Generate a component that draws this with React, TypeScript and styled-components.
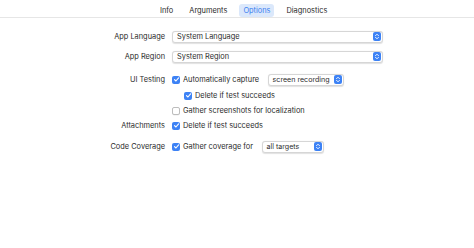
import { FC } from "react";
import styled, { createGlobalStyle } from "styled-components";

const GlobalStyle = createGlobalStyle`
  html, body {
    margin: 0;
    padding: 0;
    background: #ffffff;
  }
  body {
    font-family: "Inter", "Liberation Sans", sans-serif;
    font-size: 7.4px;
    color: #2b2b2b;
    -webkit-font-smoothing: antialiased;
  }
`;

const Page = styled.div`
  width: 474px;
  height: 248px;
  display: flex;
  flex-direction: column;
`;

const TabBar = styled.div`
  display: flex;
  align-items: center;
  gap: 8px;
  padding: 3px 0 0 156px;
  height: 14px;
  border-bottom: 1px solid #e6e6e6;
`;

const Tab = styled.div<{ $active?: boolean }>`
  height: 13px;
  line-height: 13px;
  padding: 0 4px;
  border-radius: 3px;
  background: ${(p) => (p.$active ? "#dbe8fb" : "transparent")};
  color: ${(p) => (p.$active ? "#3b7ff0" : "#2a2a2a")};
`;

const Form = styled.div`
  display: flex;
  flex-direction: column;
  padding-top: 11px;
`;

const Row = styled.div<{ $top?: number }>`
  display: grid;
  grid-template-columns: 165px 211px;
  column-gap: 7px;
  height: 15px;
  align-items: center;
  margin-top: ${(p) => p.$top ?? 0}px;
`;

const Label = styled.div`
  text-align: right;
  white-space: nowrap;
`;

const Control = styled.div<{ $indent?: number }>`
  display: flex;
  align-items: center;
  white-space: nowrap;
  padding-left: ${(p) => p.$indent ?? 0}px;
`;

const Popup = styled.div<{ $width?: number }>`
  display: flex;
  align-items: center;
  justify-content: space-between;
  box-sizing: border-box;
  width: ${(p) => (p.$width ? `${p.$width}px` : "100%")};
  height: 12px;
  padding: 0 1.5px 0 ${(p) => (p.$width ? 3.5 : 4)}px;
  background: #ffffff;
  border: 0.5px solid #d6d6d6;
  border-radius: 3px;
  box-shadow: 0 0.5px 1px rgba(0, 0, 0, 0.12);
  margin-left: ${(p) => (p.$width ? 9 : 0)}px;
  font-size: ${(p) => (p.$width ? 7.1 : 7.4)}px;
`;

const Stepper = styled.span`
  display: inline-flex;
  flex-shrink: 0;
  align-items: center;
  justify-content: center;
  width: 8px;
  height: 9px;
  margin-left: 2px;
  border-radius: 2px;
  background: #3d82f5;
`;

const Box = styled.span<{ $checked?: boolean }>`
  display: inline-flex;
  align-items: center;
  justify-content: center;
  box-sizing: border-box;
  width: 8px;
  height: 8px;
  margin-right: 3px;
  border-radius: 2px;
  background: ${(p) => (p.$checked ? "#3d82f5" : "#ffffff")};
  border: ${(p) => (p.$checked ? "none" : "0.5px solid #bdbdbd")};
  box-shadow: ${(p) => (p.$checked ? "none" : "0 0.5px 0.5px rgba(0,0,0,0.08)")};
`;

const StepperIcon: FC = () => (
  <Stepper>
    <svg width="6" height="7" viewBox="0 0 6 7">
      <path
        d="M1.5 2.7 L3 1.2 L4.5 2.7 M1.5 4.3 L3 5.8 L4.5 4.3"
        fill="none"
        stroke="#fff"
        strokeWidth="0.9"
        strokeLinecap="round"
        strokeLinejoin="round"
      />
    </svg>
  </Stepper>
);

const Checkbox: FC<{ checked?: boolean }> = ({ checked }) => (
  <Box $checked={checked}>
    {checked && (
      <svg width="7" height="7" viewBox="0 0 7 7">
        <path
          d="M1.5 3.6 L2.9 5 L5.6 1.8"
          fill="none"
          stroke="#fff"
          strokeWidth="1.1"
          strokeLinecap="round"
          strokeLinejoin="round"
        />
      </svg>
    )}
  </Box>
);

const tabs = ["Info", "Arguments", "Options", "Diagnostics"];

export default function App() {
  return (
    <>
      <GlobalStyle />
      <Page>
        <TabBar>
          {tabs.map((t) => (
            <Tab key={t} $active={t === "Options"}>
              {t}
            </Tab>
          ))}
        </TabBar>
        <Form>
          <Row>
            <Label>App Language</Label>
            <Popup>
              System Language
              <StepperIcon />
            </Popup>
          </Row>
          <Row $top={5}>
            <Label>App Region</Label>
            <Popup>
              System Region
              <StepperIcon />
            </Popup>
          </Row>
          <Row $top={8}>
            <Label>UI Testing</Label>
            <Control>
              <Checkbox checked />
              Automatically capture
              <Popup $width={76}>
                screen recording
                <StepperIcon />
              </Popup>
            </Control>
          </Row>
          <Row $top={1}>
            <Label />
            <Control $indent={12}>
              <Checkbox checked />
              Delete if test succeeds
            </Control>
          </Row>
          <Row>
            <Label />
            <Control>
              <Checkbox />
              Gather screenshots for localization
            </Control>
          </Row>
          <Row>
            <Label>Attachments</Label>
            <Control>
              <Checkbox checked />
              Delete if test succeeds
            </Control>
          </Row>
          <Row $top={6}>
            <Label>Code Coverage</Label>
            <Control>
              <Checkbox checked />
              Gather coverage for
              <Popup $width={62}>
                all targets
                <StepperIcon />
              </Popup>
            </Control>
          </Row>
        </Form>
      </Page>
    </>
  );
}
